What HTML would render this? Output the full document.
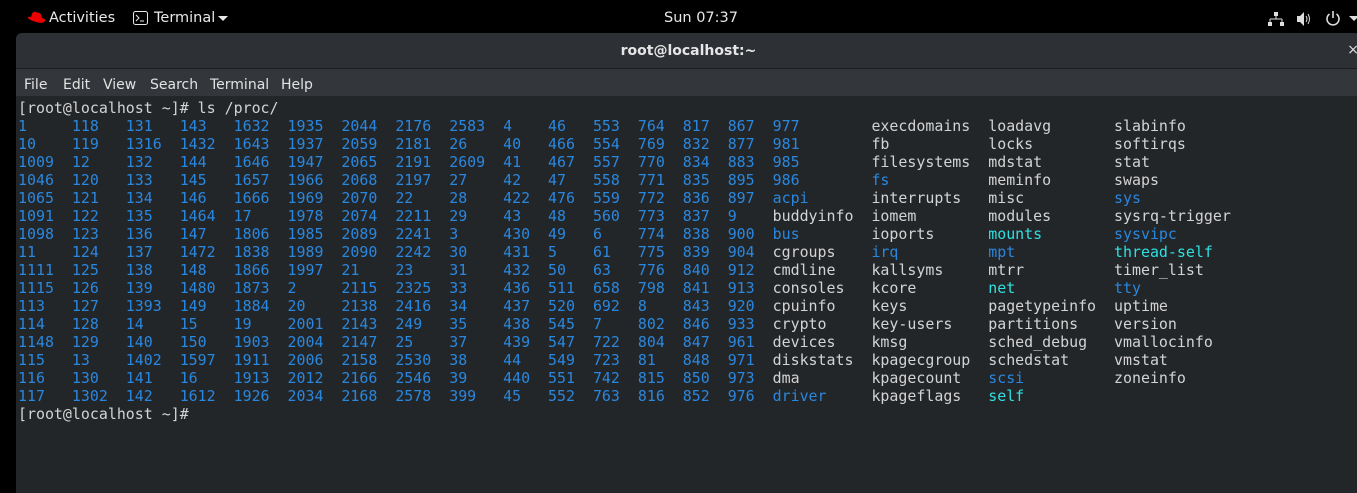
<!DOCTYPE html>
<html><head><meta charset="utf-8"><style>
*{margin:0;padding:0;box-sizing:border-box}
body{width:1357px;height:489px;background:#000;overflow:hidden;position:relative;font-family:"DejaVu Sans","Liberation Sans",sans-serif}
.top{position:absolute;left:0;top:0;width:1357px;height:33px;color:#e8e8e8;font-size:14.5px}
.top span{position:absolute;top:10px}
.win{position:absolute;left:16px;top:33px;width:1345px;height:460px;background:#232629;border-radius:6px 6px 0 0;overflow:hidden}
.title{height:36px;background:#2d3034;border-bottom:1px solid #1b1d1f;color:#e6e6e6;font-size:14px;text-align:center;line-height:36px;font-weight:bold}
.menu{height:27px;background:#33373b;color:#e2e2e2;font-size:14px;line-height:27px;position:relative}
.menu span{position:absolute;top:3px}
.term{position:absolute;left:2px;top:66px;font-family:"DejaVu Sans Mono","Liberation Mono",monospace;font-size:14.93px;line-height:18px;color:#d3d3d3;white-space:pre}
.c{position:absolute;top:18px;white-space:pre}
.b{color:#2a87de}.w{color:#d3d3d3}.y{color:#2ee0e0}
</style></head><body>
<div class="top">
<svg style="position:absolute;left:27px;top:11px" width="19" height="14" viewBox="0 0 19 14"><path d="M5 3 Q6 0 9 1 L11 2 Q13 1 14 4 L15 7 Q19 8 18 10 Q16 13 9 11 Q2 9 1 7 Q1 5 4 6 Z" fill="#e00"/></svg>
<span style="left:49px">Activities</span>
<svg style="position:absolute;left:133px;top:11px" width="15" height="14"><rect x="0.5" y="0.5" width="14" height="13" rx="2" fill="none" stroke="#e8e8e8"/><path d="M3 4 L6 7 L3 10 M7 10 H11" stroke="#e8e8e8" fill="none"/></svg>
<span style="left:154px">Terminal</span>
<svg style="position:absolute;left:218px;top:16px" width="10" height="6"><path d="M0 0 H10 L5 5 Z" fill="#e8e8e8"/></svg>
<span style="left:664px">Sun 07:37</span>
<svg style="position:absolute;left:1268px;top:12px" width="16" height="15"><rect x="6" y="0" width="4" height="4" fill="#ddd"/><path d="M8 4 V7 M2 7 H14 M2 7 V10 M14 7 V10" stroke="#ddd"/><rect x="0" y="10" width="4" height="4" fill="#ddd"/><rect x="12" y="10" width="4" height="4" fill="#ddd"/></svg>
<svg style="position:absolute;left:1297px;top:12px" width="16" height="14"><path d="M0 4 H3 L7 0 V14 L3 10 H0 Z" fill="#ddd"/><path d="M9 4 Q11 7 9 10 M11 2 Q14 7 11 12" stroke="#ddd" fill="none"/></svg>
<svg style="position:absolute;left:1325px;top:10px" width="16" height="16"><path d="M4.5 4 A6 6 0 1 0 11.5 4" stroke="#ddd" stroke-width="1.6" fill="none"/><path d="M8 1 V8" stroke="#ddd" stroke-width="1.6"/></svg>
<svg style="position:absolute;left:1349px;top:16px" width="8" height="6"><path d="M0 0 H10 L5 5 Z" fill="#ddd"/></svg>
</div>
<div class="win">
<div class="title">root@localhost:~</div>
<span style="position:absolute;right:2px;top:9px;color:#ddd;font-size:14px">×</span>
<div class="menu">
<span style="left:8px">File</span><span style="left:47px">Edit</span><span style="left:87px">View</span><span style="left:134px">Search</span><span style="left:194px">Terminal</span><span style="left:265px">Help</span>
</div>
<div class="term">[root@localhost ~]# ls /proc/
<div class="c b" style="left:0ch">1
10
1009
1046
1065
1091
1098
11
1111
1115
113
114
1148
115
116
117</div><div class="c b" style="left:6ch">118
119
12
120
121
122
123
124
125
126
127
128
129
13
130
1302</div><div class="c b" style="left:12ch">131
1316
132
133
134
135
136
137
138
139
1393
14
140
1402
141
142</div><div class="c b" style="left:18ch">143
1432
144
145
146
1464
147
1472
148
1480
149
15
150
1597
16
1612</div><div class="c b" style="left:24ch">1632
1643
1646
1657
1666
17
1806
1838
1866
1873
1884
19
1903
1911
1913
1926</div><div class="c b" style="left:30ch">1935
1937
1947
1966
1969
1978
1985
1989
1997
2
20
2001
2004
2006
2012
2034</div><div class="c b" style="left:36ch">2044
2059
2065
2068
2070
2074
2089
2090
21
2115
2138
2143
2147
2158
2166
2168</div><div class="c b" style="left:42ch">2176
2181
2191
2197
22
2211
2241
2242
23
2325
2416
249
25
2530
2546
2578</div><div class="c b" style="left:48ch">2583
26
2609
27
28
29
3
30
31
33
34
35
37
38
39
399</div><div class="c b" style="left:54ch">4
40
41
42
422
43
430
431
432
436
437
438
439
44
440
45</div><div class="c b" style="left:59ch">46
466
467
47
476
48
49
5
50
511
520
545
547
549
551
552</div><div class="c b" style="left:64ch">553
554
557
558
559
560
6
61
63
658
692
7
722
723
742
763</div><div class="c b" style="left:69ch">764
769
770
771
772
773
774
775
776
798
8
802
804
81
815
816</div><div class="c b" style="left:74ch">817
832
834
835
836
837
838
839
840
841
843
846
847
848
850
852</div><div class="c b" style="left:79ch">867
877
883
895
897
9
900
904
912
913
920
933
961
971
973
976</div><div class="c b" style="left:84ch">977
981
985
986
acpi
<span class="w">buddyinfo</span>
bus
<span class="w">cgroups
cmdline
consoles
cpuinfo
crypto
devices
diskstats
dma</span>
driver</div><div class="c w" style="left:95ch">execdomains
fb
filesystems
<span class="b">fs</span>
interrupts
iomem
ioports
<span class="b">irq</span>
kallsyms
kcore
keys
key-users
kmsg
kpagecgroup
kpagecount
kpageflags</div><div class="c w" style="left:108ch">loadavg
locks
mdstat
meminfo
misc
modules
<span class="y">mounts</span>
<span class="b">mpt</span>
mtrr
<span class="y">net</span>
pagetypeinfo
partitions
sched_debug
schedstat
<span class="b">scsi</span>
<span class="y">self</span></div><div class="c w" style="left:122ch">slabinfo
softirqs
stat
swaps
<span class="b">sys</span>
sysrq-trigger
<span class="b">sysvipc</span>
<span class="y">thread-self</span>
timer_list
<span class="b">tty</span>
uptime
version
vmallocinfo
vmstat
zoneinfo</div>
<div style="position:absolute;top:306px;left:0">[root@localhost ~]#</div>
</div>
</div>
</body></html>
